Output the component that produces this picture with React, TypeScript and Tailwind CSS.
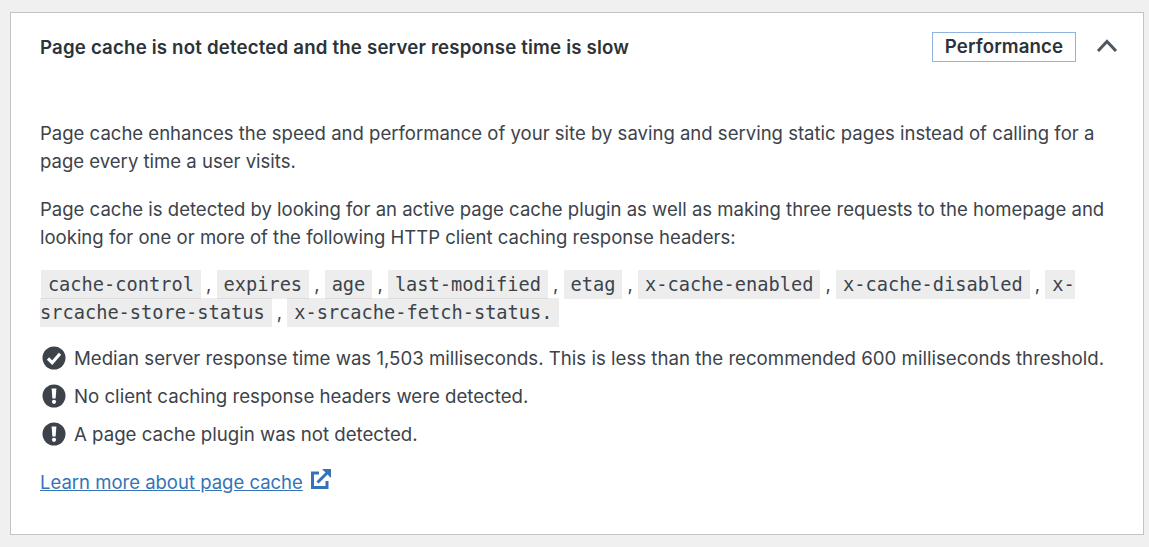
const mono = "font-['DejaVu_Sans_Mono','Liberation_Mono',monospace]";

function Code({ children, first }: { children: string; first?: boolean }) {
  return <code className={`${mono} ${first ? "ml-px" : ""} bg-black/[0.07] px-[6.9px] py-[4px] text-[18.67px] leading-none`}>{children}</code>;
}

function CheckIcon() {
  return (
    <svg viewBox="0 0 24 24" className="h-6 w-6 shrink-0" aria-hidden>
      <circle cx="12" cy="12" r="11.5" fill="#3c434a" />
      <path d="M6 12.5l4.2 4.2 7.8-9" fill="none" stroke="#fff" strokeWidth="3.2" />
    </svg>
  );
}

function WarningIcon() {
  return (
    <svg viewBox="0 0 24 24" className="h-6 w-6 shrink-0" aria-hidden>
      <circle cx="12" cy="12" r="11.5" fill="#3c434a" />
      <path d="M9.6 4.5h4.8l-.8 10h-3.2z" fill="#fff" />
      <circle cx="12" cy="17.8" r="2.1" fill="#fff" />
    </svg>
  );
}

function ExternalIcon() {
  return (
    <svg viewBox="0 0 22 22" className="ml-[7px] inline-block h-[22px] w-[22px] align-[-1px]" fill="none" aria-hidden>
      <path d="M9 5H2.5v14.5H17V13" stroke="#3473b8" strokeWidth="3" />
      <path d="M7.5 14.5L18 4" stroke="#3473b8" strokeWidth="3" />
      <path d="M12 1h9v9z" fill="#3473b8" />
    </svg>
  );
}

export default function App() {
  const items = [
    { ok: true, text: "Median server response time was 1,503 milliseconds. This is less than the recommended 600 milliseconds threshold." },
    { ok: false, text: "No client caching response headers were detected." },
    { ok: false, text: "A page cache plugin was not detected." },
  ];

  return (
    <div className="h-[547px] overflow-hidden bg-[#f0f0f1] pt-3 pl-2.5 pr-[5px] font-['Inter',sans-serif] text-[18.55px] leading-[28px] text-[#3c434a]">
      <div className="h-[523px] border border-[#c3c4c7] bg-white">
        <div className="flex h-[68px] items-center justify-between pl-[29px] pr-[24px]">
          <h2 className="pt-px text-[18.67px] font-semibold tracking-[0.18px] text-[#2c3338]">
            Page cache is not detected and the server response time is slow
          </h2>
          <div className="flex items-center">
            <span className="flex h-[30px] w-[144px] items-center justify-center border border-[#8fb4e0] pt-px text-[18.67px] font-semibold leading-none tracking-[0.1px] text-[#2c3338]">
              Performance
            </span>
            <svg viewBox="0 0 24 14" className="mb-[4px] ml-[19px] h-[14px] w-[24px]" fill="none" aria-hidden>
              <path d="M3 13L12 3.5l9 9.5" stroke="#50575e" strokeWidth="3" />
            </svg>
          </div>
        </div>
        <div className="pl-[29px] pr-[24px] pt-[38px]">
          <p>Page cache enhances the speed and performance of your site by saving and serving static pages instead of calling for a page every time a user visits.</p>
          <p className="mt-5">Page cache is detected by looking for an active page cache plugin as well as making three requests to the homepage and looking for one or more of the following HTTP client caching response headers:</p>
          <p className="mt-[19px]">
            <Code first>cache-control</Code> , <Code>expires</Code> , <Code>age</Code> , <Code>last-modified</Code> , <Code>etag</Code> , <Code>x-cache-enabled</Code> , <Code>x-cache-disabled</Code> , <Code>x-srcache-store-status</Code> , <Code>x-srcache-fetch-status.</Code>
          </p>
          <ul className="mt-[18px] flex flex-col gap-[10px] text-[18.65px]">
            {items.map((item) => (
              <li key={item.text} className="flex items-center gap-[8px] pl-0.5">
                {item.ok ? <CheckIcon /> : <WarningIcon />}
                <span>{item.text}</span>
              </li>
            ))}
          </ul>
          <p className="mt-5 text-[18.5px]">
            <a href="#" className="text-[#3473b8] underline">Learn more about page cache</a>
            <ExternalIcon />
          </p>
        </div>
      </div>
    </div>
  );
}
